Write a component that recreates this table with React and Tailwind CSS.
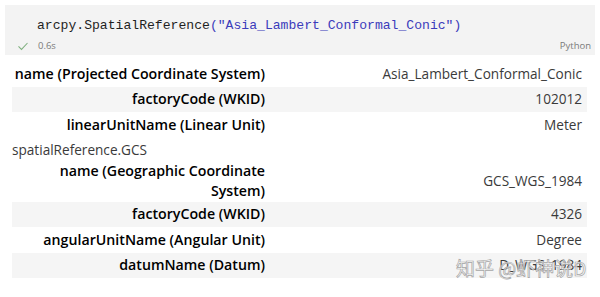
const rowsA = [
    ['name (Projected Coordinate System)', 'Asia_Lambert_Conformal_Conic'],
    ['factoryCode (WKID)', '102012'],
    ['linearUnitName (Linear Unit)', 'Meter'],
];

const rowsB = [
    ['name (Geographic Coordinate System)', 'GCS_WGS_1984'],
    ['factoryCode (WKID)', '4326'],
    ['angularUnitName (Angular Unit)', 'Degree'],
    ['datumName (Datum)', 'D_WGS_1984'],
];

function PropTable({ rows }) {
    return (
        <div className="mx-[12px] w-[575px]">
            {rows.map(([label, value], i) => (
                <div
                    key={i}
                    className={`flex items-center min-h-[25.5px] ${i % 2 === 1 ? 'bg-[#f5f5f5]' : 'bg-white'}`}
                >
                    <div className="w-[258px] shrink-0 pr-[5px] text-right font-semibold text-[14.2px] text-black leading-[20.5px]">
                        {label}
                    </div>
                    <div className="flex-1 pr-[5px] text-right text-[13.6px] text-[#3a3a3a]">{value}</div>
                </div>
            ))}
        </div>
    );
}

export default function App() {
    return (
        <div
            className="relative w-[600px] h-[297px] bg-white overflow-hidden"
            style={{ fontFamily: '"Open Sans", "Noto Sans", sans-serif' }}
        >
            {/* code cell */}
            <div className="mx-[5px] mt-[5px] h-[50px] bg-[#f3f3f3]">
                <div className="pl-[32px] pt-[12px] h-[34px] text-[13.1px] leading-[18px] text-[#1f1f1f] font-['Liberation_Mono',monospace]">
                    arcpy.SpatialReference<span className="text-[#3b3bbb]">("Asia_Lambert_Conformal_Conic")</span>
                </div>
                <div className="flex items-center h-[14px] pl-[12px] pr-[4px] text-[9.5px] text-[#7a7a7a]">
                    <svg width="12" height="12" viewBox="0 0 16 16" fill="none" stroke="#7fb07f" strokeWidth="1.4">
                        <path d="M2 8.5l4 4L14 4" />
                    </svg>
                    <span className="ml-[9px]">0.6s</span>
                    <span className="ml-auto">Python</span>
                </div>
            </div>

            <div className="h-[6px]" />
            <PropTable rows={rowsA} />
            <div className="pl-[12px] h-[23px] leading-[23px] text-[13.6px] text-[#3a3a3a]">spatialReference.GCS</div>
            <PropTable rows={rowsB} />

            {/* watermark */}
            <div className="absolute left-[456px] top-[256px] text-[19px] leading-[24px] text-white/75 [-webkit-text-stroke:0.7px_#a5a5a5] font-['Noto_Sans_CJK_SC',sans-serif]">
                知乎 @虾神说D
            </div>
        </div>
    );
}
